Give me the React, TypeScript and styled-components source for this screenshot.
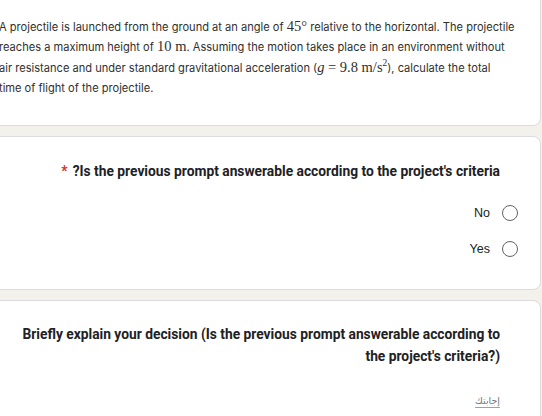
import React from "react";
import styled, { createGlobalStyle } from "styled-components";

const Global = createGlobalStyle`
  html, body { margin: 0; padding: 0; background: #f2f1eb; overflow: hidden; }
  body { width: 542px; height: 416px; }
`;

const Page = styled.div`
  display: flex;
  flex-direction: column;
  gap: 10px;
  margin-left: -24px;
  margin-right: 1px;
  margin-top: -12px;
`;

const Card = styled.div<{ $rtl?: boolean }>`
  background: #ffffff;
  border: 1px solid #dadce0;
  border-radius: 8px;
  direction: ${(p) => (p.$rtl ? "rtl" : "ltr")};
`;

const DescCard = styled(Card)`
  padding: 28px 24px 20px 22px;
  height: 138px;
  box-sizing: border-box;
`;

const Desc = styled.p`
  margin: 0;
  font-family: Inter, "Liberation Sans", Arial, sans-serif;
  font-size: 11.1px;
  line-height: 20.3px;
  color: #2f2f2f;
`;

const M = styled.span`
  font-family: "Liberation Serif", "Times New Roman", serif;
  font-size: 14.5px;
  line-height: 0;
`;

const Sup = styled.span`
  font-size: 9.5px;
  position: relative;
  top: -0.6em;
  line-height: 0;
`;

const QCard = styled(Card)`
  padding: 23px 40px 21px 24px;
  height: 154px;
  box-sizing: border-box;
`;

const QTitle = styled.div`
  font-family: Roboto, "Liberation Sans", sans-serif;
  font-weight: 700;
  font-size: 13.8px;
  line-height: 22px;
  color: #202124;
  text-align: right;
`;

const Star = styled.span`
  color: #d93025;
  margin-right: 5px;
`;

const Options = styled.div`
  display: flex;
  flex-direction: column;
  gap: 16px;
  margin-top: 21px;
  margin-right: -18px;
`;

const Option = styled.label`
  display: flex;
  align-items: center;
  gap: 12px;
  height: 20px;
  font-family: "Liberation Sans", Arial, sans-serif;
  font-size: 12.5px;
  color: #202124;
`;

const Circle = styled.span`
  width: 14px;
  height: 14px;
  border: 1.5px solid #5f6368;
  border-radius: 50%;
  flex: none;
`;

const TCard = styled(Card)`
  padding: 22px 40px 24px 24px;
  height: 160px;
  box-sizing: border-box;
`;

const Answer = styled.div`
  margin-top: 27px;
  display: flex;
  justify-content: flex-start;
`;

const AnswerText = styled.span`
  font-family: "Noto Sans", "DejaVu Sans", sans-serif;
  font-size: 9.5px;
  color: #70757a;
  border-bottom: 1px solid #9aa0a6;
  line-height: 13px;
`;

export default function App() {
  return (
    <>
      <Global />
      <Page>
        <DescCard>
          <Desc>
            A projectile is launched from the ground at an angle of <M>45°</M> relative to the horizontal. The projectile
            reaches a maximum height of <M>10 m</M>. Assuming the motion takes place in an environment without
            air resistance and under standard gravitational acceleration (<M><i>g</i> = 9.8 m/s<Sup>2</Sup></M>), calculate the total
            time of flight of the projectile.
          </Desc>
        </DescCard>
        <QCard $rtl>
          <QTitle>
            Is the previous prompt answerable according to the project's criteria?
            <Star>*</Star>
          </QTitle>
          <Options>
            <Option>
              <Circle />
              No
            </Option>
            <Option>
              <Circle />
              Yes
            </Option>
          </Options>
        </QCard>
        <TCard $rtl>
          <QTitle>
            Briefly explain your decision (Is the previous prompt answerable according to the project's criteria?)
          </QTitle>
          <Answer>
            <AnswerText>إجابتك</AnswerText>
          </Answer>
        </TCard>
      </Page>
    </>
  );
}
